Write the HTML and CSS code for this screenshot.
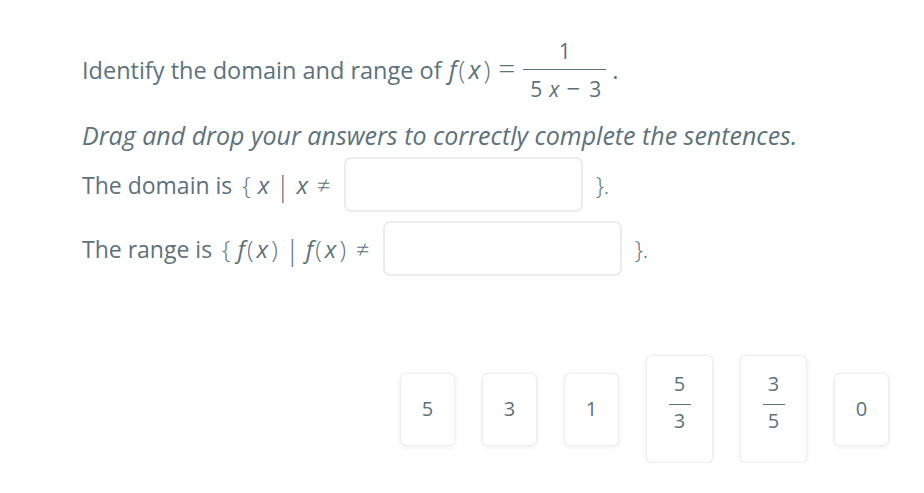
FILE: index.html
```html
<!DOCTYPE html>
<html lang="en">
<head>
<meta charset="utf-8">
<title>Domain and range</title>
<link rel="stylesheet" href="styles.css">
</head>
<body>
<main class="page">
  <p class="prompt">Identify the domain and range of <span class="math"><i class="mi f">f</i><span class="mo">(</span><i class="mi">x</i><span class="mo">)</span></span><span class="eq">=</span><span class="frac"><span class="num">1</span><span class="den">5<i class="sx">x</i><span class="minus">−</span>3</span></span><span class="dot">.</span></p>
  <p class="instr">Drag and drop your answers to correctly complete the sentences.</p>
  <div class="sentence">
    <span class="label">The domain is</span>
    <span class="math set"><span class="brace">{</span><i class="mi">x</i><span class="bar">|</span><i class="mi">x</i><span class="ne">≠</span></span>
    <span class="drop"></span>
    <span class="close">}.</span>
  </div>
  <div class="sentence">
    <span class="label">The range is</span>
    <span class="math set"><span class="brace">{</span><i class="mi f">f</i><span class="mo">(</span><i class="mi">x</i><span class="mo">)</span><span class="bar">|</span><i class="mi f">f</i><span class="mo">(</span><i class="mi">x</i><span class="mo">)</span><span class="ne">≠</span></span>
    <span class="drop"></span>
    <span class="close">}.</span>
  </div>
  <div class="tiles">
    <div class="tile">5</div>
    <div class="tile">3</div>
    <div class="tile">1</div>
    <div class="tile tall"><span class="tfrac"><span class="tn">5</span><span class="td">3</span></span></div>
    <div class="tile tall"><span class="tfrac"><span class="tn">3</span><span class="td">5</span></span></div>
    <div class="tile">0</div>
  </div>
</main>
</body>
</html>
```
FILE: styles.css
```css
html, body {
  margin: 0;
  padding: 0;
  background: #ffffff;
}

body {
  font-family: "Open Sans", "Noto Sans", sans-serif;
  color: #5c727b;
}

.page {
  padding: 39px 35px 0 82px;
}

.prompt {
  margin: 0;
  font-size: 23.5px;
  line-height: 30px;
}

.math {
  font-size: 24px;
}

.prompt .math {
  font-size: 25px;
}

.mi {
  font-style: italic;
  margin: 0 1px;
}

.mi.f {
  margin-right: 0;
}

.mo {
  font-weight: 300;
  margin: 0 2px;
}

.eq {
  font-size: 30px;
  font-weight: 300;
  margin: 0 8px 0 6px;
}

.frac {
  display: inline-flex;
  flex-direction: column;
  align-items: center;
  vertical-align: 20px;
  font-size: 21px;
}

.num {
  line-height: 24px;
  padding-bottom: 6px;
}

.den {
  border-top: 1px solid #5c727b;
  line-height: 24px;
  padding: 6px 5px 0 7px;
}

.sx {
  margin: 0 7px;
}

.minus {
  font-size: 24px;
  margin-right: 9px;
}

.dot {
  margin-left: 6px;
}

.instr {
  margin: 19px 0 0;
  font-size: 25px;
  font-style: italic;
  line-height: 30px;
}

.sentence {
  display: flex;
  align-items: center;
  font-size: 23px;
  line-height: 30px;
  margin-top: 7px;
}

.sentence + .sentence {
  margin-top: 9px;
}

.set {
  margin-left: 10px;
  display: flex;
  align-items: center;
}

.brace {
  font-weight: 300;
  margin-right: 6px;
}

.bar {
  font-weight: 300;
  font-size: 28px;
  margin: 0 5px;
}

.ne {
  margin-left: 8px;
  font-weight: 300;
}

.drop {
  box-sizing: border-box;
  width: 239px;
  height: 55px;
  margin-left: 13px;
  border: 2px solid #ececec;
  border-radius: 7px;
  background: #ffffff;
}

.close {
  margin-left: 13px;
  font-weight: 300;
}

.tiles {
  display: flex;
  justify-content: flex-end;
  align-items: center;
  gap: 27px;
  margin-top: 79px;
}

.tile {
  box-sizing: border-box;
  width: 55px;
  height: 73px;
  border: 1px solid #eeeeee;
  border-radius: 6px;
  background: #ffffff;
  box-shadow: 0 1px 5px rgba(0, 0, 0, 0.08);
  display: flex;
  align-items: center;
  justify-content: center;
  font-size: 20px;
  line-height: 24px;
}

.tile.tall {
  width: 67px;
  height: 108px;
}

.tfrac {
  display: flex;
  flex-direction: column;
  align-items: center;
}

.tn {
  width: 22px;
  text-align: center;
  line-height: 24px;
  padding-bottom: 8px;
  border-bottom: 1px solid #5c727b;
}

.td {
  line-height: 24px;
  padding: 4px 0 14px;
}
```
